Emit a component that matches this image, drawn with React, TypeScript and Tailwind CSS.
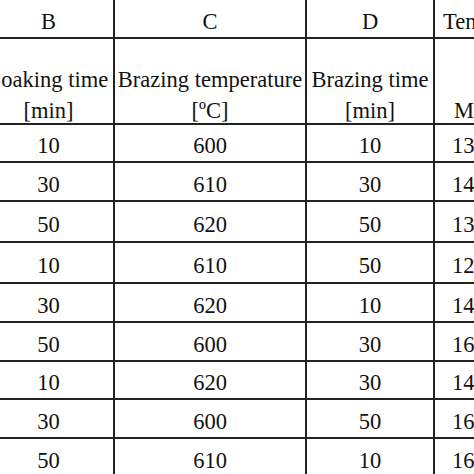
import React from 'react';

// Orthogonal array table (L9) — clipped view
const rows: [string, string, string, string][] = [
  ['10', '600', '10', '135'],
  ['30', '610', '30', '148'],
  ['50', '620', '50', '139'],
  ['10', '610', '50', '126'],
  ['30', '620', '10', '142'],
  ['50', '600', '30', '163'],
  ['10', '620', '30', '147'],
  ['30', '600', '50', '161'],
  ['50', '610', '10', '168'],
];

// row heights in px, bottom border included
const rowHeights = ['h-[38px]', 'h-[39px]', 'h-[41px]', 'h-[41px]', 'h-[39px]', 'h-[39px]', 'h-[38px]', 'h-[39px]', 'h-[40px]'];

const cell = 'border-r-2 border-b-2 border-[#222]';

const App: React.FC = () => {
  return (
    <div
      className="w-[474px] h-[474px] overflow-hidden bg-white text-[#111] text-[22.5px]"
      style={{ fontFamily: '"Liberation Serif", "Times New Roman", serif' }}
    >
      <div className="-ml-[16px] w-[651px] grid grid-cols-[131px_192px_128px_200px]">
        {/* top header row: factor letters */}
        <div className={`${cell} h-[39px] flex items-center justify-center pt-[6px]`}>B</div>
        <div className={`${cell} h-[39px] flex items-center justify-center pt-[6px]`}>C</div>
        <div className={`${cell} h-[39px] flex items-center justify-center pt-[6px]`}>D</div>
        <div className={`${cell} h-[39px] flex items-center pl-[8px] pt-[6px] whitespace-nowrap`}>Tensile strength</div>

        {/* second header row: parameter names */}
        <div className={`${cell} h-[86px] pt-[25px] leading-[31px] text-center whitespace-nowrap`}>
          <div>Soaking time</div>
          <div>[min]</div>
        </div>
        <div className={`${cell} h-[86px] pt-[25px] leading-[31px] text-center whitespace-nowrap`}>
          <div>Brazing temperature</div>
          <div>[ºC]</div>
        </div>
        <div className={`${cell} h-[86px] pt-[25px] leading-[31px] text-center whitespace-nowrap`}>
          <div>Brazing time</div>
          <div>[min]</div>
        </div>
        <div className={`${cell} h-[86px] pt-[25px] leading-[31px] pl-[19px] whitespace-nowrap`}>
          <div>&nbsp;</div>
          <div>MPa</div>
        </div>

        {rows.map((r, i) => (
          <React.Fragment key={i}>
            <div className={`${cell} ${rowHeights[i]} flex items-center justify-center pt-[6px]`}>{r[0]}</div>
            <div className={`${cell} ${rowHeights[i]} flex items-center justify-center pt-[6px]`}>{r[1]}</div>
            <div className={`${cell} ${rowHeights[i]} flex items-center justify-center pt-[6px]`}>{r[2]}</div>
            <div className={`${cell} ${rowHeights[i]} flex items-center pl-[17px] pt-[6px]`}>{r[3]}</div>
          </React.Fragment>
        ))}
      </div>
    </div>
  );
};

export default App;
